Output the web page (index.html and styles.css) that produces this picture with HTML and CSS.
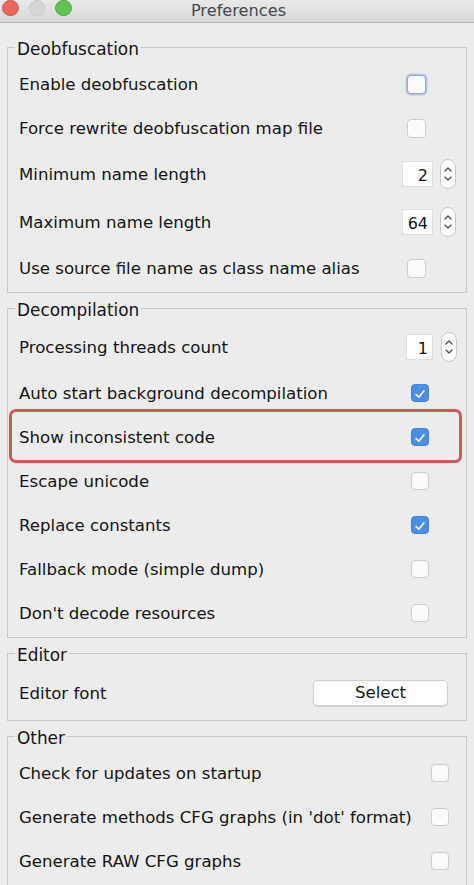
FILE: index.html
```html
<!DOCTYPE html>
<html lang="en">
<head>
<meta charset="utf-8">
<title>Preferences</title>
<link rel="stylesheet" href="styles.css">
</head>
<body>
<div class="window">
  <header class="titlebar">
    <div class="lights">
      <span class="light red"></span>
      <span class="light gray"></span>
      <span class="light green"></span>
    </div>
    <div class="title">Preferences</div>
    <div class="spacer"></div>
  </header>

  <main class="content">
    <fieldset class="group g-deob">
      <legend>Deobfuscation</legend>
      <div class="row"><span class="label">Enable deobfuscation</span><span class="cb focus"></span></div>
      <div class="row"><span class="label">Force rewrite deobfuscation map file</span><span class="cb"></span></div>
      <div class="row spin-row"><span class="label">Minimum name length</span>
        <span class="spinner"><span class="field">2</span><span class="stepper"><svg viewBox="0 0 16 30" width="16" height="30"><path d="M5 12 L8 9 L11 12 M5 18 L8 21 L11 18" /></svg></span></span>
      </div>
      <div class="row spin-row"><span class="label">Maximum name length</span>
        <span class="spinner"><span class="field">64</span><span class="stepper"><svg viewBox="0 0 16 30" width="16" height="30"><path d="M5 12 L8 9 L11 12 M5 18 L8 21 L11 18" /></svg></span></span>
      </div>
      <div class="row"><span class="label">Use source file name as class name alias</span><span class="cb"></span></div>
    </fieldset>

    <fieldset class="group g-dec">
      <legend>Decompilation</legend>
      <div class="row spin-row"><span class="label">Processing threads count</span>
        <span class="spinner"><span class="field">1</span><span class="stepper"><svg viewBox="0 0 16 30" width="16" height="30"><path d="M5 12 L8 9 L11 12 M5 18 L8 21 L11 18" /></svg></span></span>
      </div>
      <div class="row"><span class="label">Auto start background decompilation</span><span class="cb checked"><svg viewBox="0 0 18 18" width="18" height="18"><path d="M4.6 9.6 L7.6 12.6 L13.4 5.4" /></svg></span></div>
      <div class="row highlighted"><span class="label">Show inconsistent code</span><span class="cb checked"><svg viewBox="0 0 18 18" width="18" height="18"><path d="M4.6 9.6 L7.6 12.6 L13.4 5.4" /></svg></span></div>
      <div class="row"><span class="label">Escape unicode</span><span class="cb"></span></div>
      <div class="row"><span class="label">Replace constants</span><span class="cb checked"><svg viewBox="0 0 18 18" width="18" height="18"><path d="M4.6 9.6 L7.6 12.6 L13.4 5.4" /></svg></span></div>
      <div class="row"><span class="label">Fallback mode (simple dump)</span><span class="cb"></span></div>
      <div class="row"><span class="label">Don't decode resources</span><span class="cb"></span></div>
    </fieldset>

    <fieldset class="group g-ed">
      <legend>Editor</legend>
      <div class="row editor-row"><span class="label">Editor font</span><button class="btn" type="button">Select</button></div>
    </fieldset>

    <fieldset class="group g-other">
      <legend>Other</legend>
      <div class="row"><span class="label">Check for updates on startup</span><span class="cb"></span></div>
      <div class="row"><span class="label">Generate methods CFG graphs (in 'dot' format)</span><span class="cb"></span></div>
      <div class="row"><span class="label">Generate RAW CFG graphs</span><span class="cb"></span></div>
    </fieldset>
  </main>
</div>
</body>
</html>
```

FILE: styles.css
```css
html, body {
  margin: 0;
  padding: 0;
  overflow: hidden;
  height: 885px;
}

body {
  background: #ececec;
  font-family: "DejaVu Sans", "Liberation Sans", sans-serif;
  color: #141414;
}

.window {
  width: 474px;
}

/* ---------- Title bar ---------- */
.titlebar {
  height: 22px;
  display: grid;
  grid-template-columns: 1fr auto 1fr;
  background: linear-gradient(#e9e9e9, #d7d7d7);
  border-bottom: 1px solid #b6b6b6;
}

.lights {
  display: flex;
  gap: 10px;
  padding-left: 2px;
  align-items: flex-start;
}

.light {
  width: 16.5px;
  height: 16.5px;
  margin-top: -0.5px;
  border-radius: 50%;
  box-sizing: border-box;
}

.light.red { background: #e9675b; border: 1px solid #d55a4f; }
.light.gray { background: #d6d6d6; border: 1px solid #c8c8c8; }
.light.green { background: #60c454; border: 1px solid #52ad47; }

.title {
  font-size: 16.2px;
  line-height: 21px;
  color: #484848;
  padding-left: 3px;
}

/* ---------- Content ---------- */
.content {
  padding-top: 12px;
}

.group {
  margin: 3px 7px 0;
  border: 1px solid #c7c7c7;
  padding: 3px 7px 2px;
  min-width: 0;
}

.group:first-child {
  margin-top: 0;
}

.group legend {
  font-size: 16.9px;
  line-height: 20px;
  padding: 4px 2px 0;
  color: #141414;
}

.row {
  height: 44px;
  display: flex;
  align-items: center;
  justify-content: space-between;
  padding-left: 4px;
  font-size: 16.6px;
}

.row.spin-row { height: 48px; }
.row.editor-row { height: 50px; }

.label {
  white-space: nowrap;
}

/* ---------- Checkboxes ---------- */
.cb {
  width: 18px;
  height: 18px;
  box-sizing: border-box;
  border: 1px solid #cdcdcd;
  border-radius: 4px;
  background: #fbfbfb;
  display: flex;
  flex-shrink: 0;
}

.g-deob .cb {
  width: 19px;
  height: 19px;
}

.cb.focus {
  border: 1px solid #8eaad0;
  box-shadow: 0 0 0 1.5px #b3c8e4;
}

.cb.checked {
  background: #4a8ee8;
  border-color: #3f82dc;
}

.cb svg path {
  fill: none;
  stroke: #ffffff;
  stroke-width: 1.9;
  stroke-linecap: round;
  stroke-linejoin: round;
}

.g-deob .cb { margin-right: 33px; }
.g-dec .cb { margin-right: 30px; }
.g-other .cb { margin-right: 10px; }

/* ---------- Spinners ---------- */
.spinner {
  display: flex;
  align-items: center;
  gap: 7px;
  margin-right: 3px;
}

.field {
  width: 31px;
  height: 26px;
  box-sizing: border-box;
  background: #ffffff;
  border: 1px solid #dedede;
  text-align: right;
  padding-right: 4px;
  font-size: 16px;
  line-height: 27px;
}

.g-dec .spinner { gap: 8px; margin-right: 2px; }
.g-dec .field { width: 27px; }

.stepper {
  width: 16px;
  height: 30px;
  box-sizing: border-box;
  border: 1px solid #c9c9c9;
  border-radius: 8px;
  background: #fbfbfb;
  display: flex;
  justify-content: center;
  align-items: center;
}

.stepper svg {
  flex-shrink: 0;
}

.stepper svg path {
  fill: none;
  stroke: #4d4d4d;
  stroke-width: 1.3;
  stroke-linecap: round;
  stroke-linejoin: round;
}

/* ---------- Button ---------- */
.btn {
  width: 135px;
  height: 26px;
  margin-right: 11px;
  border: 1px solid #cfcfcf;
  border-radius: 5px;
  background: #ffffff;
  box-shadow: 0 1px 1px rgba(0, 0, 0, 0.12);
  font-family: "DejaVu Sans", "Liberation Sans", sans-serif;
  font-size: 16.6px;
  line-height: 22px;
  color: #141414;
  padding: 0;
}

/* ---------- Highlight annotation ---------- */
.row.highlighted {
  position: relative;
}

.row.highlighted::after {
  content: "";
  position: absolute;
  top: -6px;
  bottom: -4px;
  left: -6px;
  right: -3px;
  border: 3px solid #cc5a57;
  border-radius: 7px;
  box-shadow: 0 0 1px rgba(204, 90, 87, 0.5);
  pointer-events: none;
}
```
